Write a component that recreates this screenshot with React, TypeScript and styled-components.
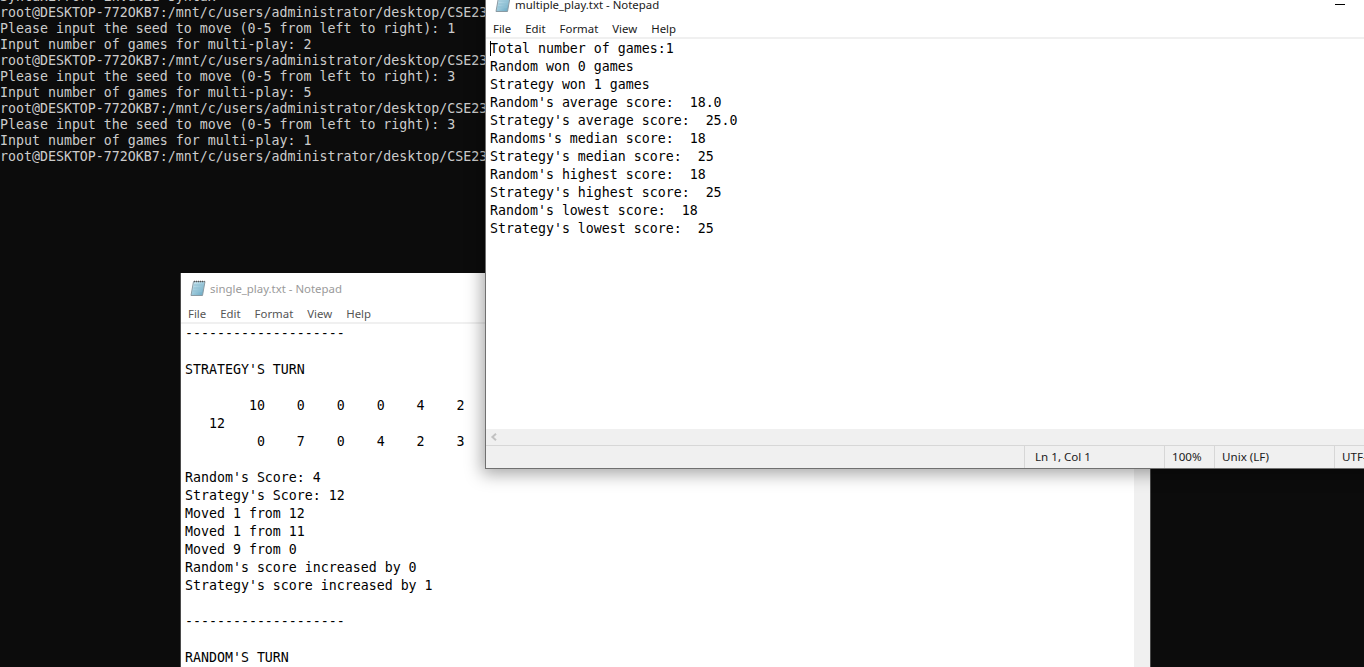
import React from "react";
import styled, { createGlobalStyle } from "styled-components";

const TERMINAL_LINES = [
  "SyntaxError: invalid syntax",
  "root@DESKTOP-772OKB7:/mnt/c/users/administrator/desktop/CSE231",
  "Please input the seed to move (0-5 from left to right): 1",
  "Input number of games for multi-play: 2",
  "root@DESKTOP-772OKB7:/mnt/c/users/administrator/desktop/CSE231",
  "Please input the seed to move (0-5 from left to right): 3",
  "Input number of games for multi-play: 5",
  "root@DESKTOP-772OKB7:/mnt/c/users/administrator/desktop/CSE231",
  "Please input the seed to move (0-5 from left to right): 3",
  "Input number of games for multi-play: 1",
  "root@DESKTOP-772OKB7:/mnt/c/users/administrator/desktop/CSE231",
];

const SINGLE_TEXT = `--------------------

STRATEGY'S TURN

        10    0    0    0    4    2
   12
         0    7    0    4    2    3

Random's Score: 4
Strategy's Score: 12
Moved 1 from 12
Moved 1 from 11
Moved 9 from 0
Random's score increased by 0
Strategy's score increased by 1

--------------------

RANDOM'S TURN`;

const MULTI_TEXT = `Total number of games:1
Random won 0 games
Strategy won 1 games
Random's average score:  18.0
Strategy's average score:  25.0
Randoms's median score:  18
Strategy's median score:  25
Random's highest score:  18
Strategy's highest score:  25
Random's lowest score:  18
Strategy's lowest score:  25`;

const MENU_ITEMS = ["File", "Edit", "Format", "View", "Help"];

const GlobalStyle = createGlobalStyle`
  html, body {
    margin: 0;
    padding: 0;
    background: #0c0c0c;
  }
`;

const Desktop = styled.div`
  position: relative;
  width: 100vw;
  height: 100vh;
  overflow: hidden;
  background: #0c0c0c;
`;

const Terminal = styled.pre`
  margin: -11px 0 0;
  font-family: "DejaVu Sans Mono", "Liberation Mono", monospace;
  font-size: 13.28px;
  line-height: 16px;
  color: #cccccc;
`;

const Window = styled.section<{ $left: number; $top: number; $height: number; $front?: boolean }>`
  position: absolute;
  left: ${(p) => p.$left}px;
  top: ${(p) => p.$top}px;
  width: 971px;
  height: ${(p) => p.$height}px;
  box-sizing: border-box;
  display: flex;
  flex-direction: column;
  background: #ffffff;
  border: 1px solid ${(p) => (p.$front ? "#707070" : "#4a4a4a")};
  border-top: 0;
  box-shadow: ${(p) => (p.$front ? "-3px 5px 16px rgba(0, 0, 0, 0.35)" : "none")};
`;

const TitleBar = styled.header<{ $active?: boolean; $height: number }>`
  display: flex;
  align-items: center;
  flex: 0 0 ${(p) => p.$height}px;
  padding-left: 9px;
  font-family: "Noto Sans", sans-serif;
  font-size: 11.4px;
  color: ${(p) => (p.$active ? "#1a1a1a" : "#9a9a9a")};
`;

const TitleText = styled.span`
  margin-left: 4px;
  flex: 1;
`;

const CaptionButton = styled.div`
  width: 46px;
  height: 28px;
  display: flex;
  align-items: center;
  justify-content: center;
`;

const MinimizeBar = styled.span`
  width: 10px;
  height: 1px;
  background: #000000;
`;

const MenuBar = styled.nav<{ $active?: boolean }>`
  display: flex;
  flex: 0 0 19px;
  min-height: 0;
  border-bottom: 2px solid #f0f0f0;
  font-family: "Noto Sans", sans-serif;
  font-size: 11.4px;
  line-height: 22px;
  color: ${(p) => (p.$active ? "#1a1a1a" : "#555555")};
`;

const MenuItem = styled.span`
  padding: 0 7px;
`;

const Body = styled.div`
  display: flex;
  flex: 1;
  min-height: 0;
`;

const TextArea = styled.pre`
  position: relative;
  flex: 1;
  margin: 0;
  padding: 1px 0 0 4px;
  overflow: hidden;
  font-family: "DejaVu Sans Mono", "Liberation Mono", monospace;
  font-size: 13.28px;
  line-height: 18px;
  color: #000000;
`;

const Caret = styled.span`
  position: absolute;
  left: 4px;
  top: 2px;
  width: 1px;
  height: 15px;
  background: #000000;
`;

const VScroll = styled.div`
  flex: 0 0 16px;
  background: #f0f0f0;
`;

const HScroll = styled.div`
  display: flex;
  align-items: center;
  flex: 0 0 16px;
  padding-left: 4px;
  background: #f0f0f0;
`;

const StatusBar = styled.footer`
  display: flex;
  flex: 0 0 23px;
  min-height: 0;
  box-sizing: border-box;
  justify-content: flex-end;
  background: #f0f0f0;
  border-top: 1px solid #d7d7d7;
  font-family: "Noto Sans", sans-serif;
  font-size: 11.6px;
  line-height: 22px;
  color: #1a1a1a;
`;

const StatusCell = styled.span<{ $width: number; $pad: number }>`
  width: ${(p) => p.$width}px;
  box-sizing: border-box;
  padding-left: ${(p) => p.$pad}px;
  border-left: 1px solid #d7d7d7;
  white-space: nowrap;
  overflow: hidden;
`;

const NotepadIcon = () => (
  <svg width="16" height="16" viewBox="0 0 16 16" style={{ flex: "none" }}>
    <defs>
      <linearGradient id="pad" x1="0" y1="0" x2="1" y2="1">
        <stop offset="0" stopColor="#d8eef6" />
        <stop offset="1" stopColor="#5fa3bf" />
      </linearGradient>
    </defs>
    <path d="M3.5 1.5H15L12.5 15.5H1Z" fill="url(#pad)" stroke="#8a9aa3" strokeWidth="1" />
    <path d="M4 5H13M3.5 8H12.5M3 11H12" stroke="#8fc0d3" strokeWidth="1" />
    <path d="M4 1.5H14.5" stroke="#555555" strokeWidth="1.4" strokeDasharray="1 1" />
  </svg>
);

const ChevronLeft = () => (
  <svg width="8" height="8" viewBox="0 0 8 8">
    <path d="M6 0.8L2.4 4L6 7.2" fill="none" stroke="#c2c2c2" strokeWidth="2" />
  </svg>
);

interface NotepadProps {
  title: string;
  active?: boolean;
  titleHeight: number;
}

const NotepadChrome: React.FC<NotepadProps> = ({ title, active, titleHeight }) => (
  <>
    <TitleBar $active={active} $height={titleHeight}>
      <NotepadIcon />
      <TitleText>{title}</TitleText>
      <CaptionButton>
        <MinimizeBar />
      </CaptionButton>
      <CaptionButton />
      <CaptionButton />
    </TitleBar>
    <MenuBar $active={active}>
      {MENU_ITEMS.map((item) => (
        <MenuItem key={item}>{item}</MenuItem>
      ))}
    </MenuBar>
  </>
);

export default function App() {
  return (
    <Desktop>
      <GlobalStyle />
      <Terminal>{TERMINAL_LINES.join("\n")}</Terminal>

      <Window $left={180} $top={273} $height={520}>
        <NotepadChrome title="single_play.txt - Notepad" titleHeight={30} />
        <Body>
          <TextArea>{SINGLE_TEXT}</TextArea>
          <VScroll />
        </Body>
      </Window>

      <Window $left={485} $top={-10} $height={479} $front>
        <NotepadChrome title="multiple_play.txt - Notepad" titleHeight={28} active />
        <Body>
          <TextArea>
            <Caret />
            {MULTI_TEXT}
          </TextArea>
        </Body>
        <HScroll>
          <ChevronLeft />
        </HScroll>
        <StatusBar>
          <StatusCell $width={140} $pad={10}>Ln 1, Col 1</StatusCell>
          <StatusCell $width={50} $pad={7}>100%</StatusCell>
          <StatusCell $width={120} $pad={7}>Unix (LF)</StatusCell>
          <StatusCell $width={121} $pad={7}>UTF-8</StatusCell>
        </StatusBar>
      </Window>
    </Desktop>
  );
}
